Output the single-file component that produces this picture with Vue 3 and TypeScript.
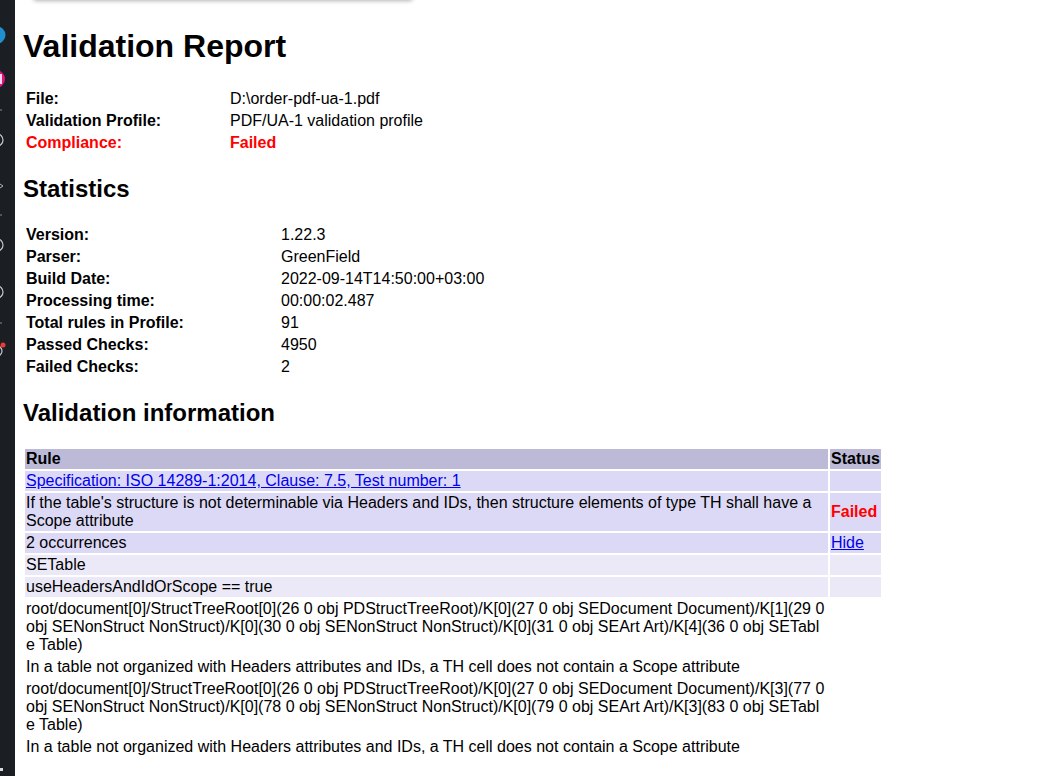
<script setup lang="ts">
const fileRows = [
  { label: 'File:', value: 'D:\\order-pdf-ua-1.pdf', failed: false },
  { label: 'Validation Profile:', value: 'PDF/UA-1 validation profile', failed: false },
  { label: 'Compliance:', value: 'Failed', failed: true },
]
const statRows = [
  ['Version:', '1.22.3'],
  ['Parser:', 'GreenField'],
  ['Build Date:', '2022-09-14T14:50:00+03:00'],
  ['Processing time:', '00:00:02.487'],
  ['Total rules in Profile:', '91'],
  ['Passed Checks:', '4950'],
  ['Failed Checks:', '2'],
]
const message = 'In a table not organized with Headers attributes and IDs, a TH cell does not contain a Scope attribute'
const occurrences = [
  'root/document[0]/StructTreeRoot[0](26 0 obj PDStructTreeRoot)/K[0](27 0 obj SEDocument Document)/K[1](29 0 obj SENonStruct NonStruct)/K[0](30 0 obj SENonStruct NonStruct)/K[0](31 0 obj SEArt Art)/K[4](36 0 obj SETable Table)',
  'root/document[0]/StructTreeRoot[0](26 0 obj PDStructTreeRoot)/K[0](27 0 obj SEDocument Document)/K[3](77 0 obj SENonStruct NonStruct)/K[0](78 0 obj SENonStruct NonStruct)/K[0](79 0 obj SEArt Art)/K[3](83 0 obj SETable Table)',
]
</script>

<template>
  <div class="page">
    <aside class="rail">
      <svg width="15" height="776" viewBox="0 0 15 776" fill="none">
        <circle cx="-3" cy="35" r="8.5" fill="#1f8fd0" />
        <circle cx="-4" cy="79" r="9" fill="#e0127f" />
        <rect x="0" y="74" width="2" height="10" fill="#f7d7e8" />
        <path d="M0 110h2" stroke="#8a8d91" />
        <circle cx="-3" cy="140" r="6" stroke="#c4c6c8" stroke-width="1.2" />
        <path d="M0 184l3 2-3 2" stroke="#b0b2b5" />
        <path d="M0 215h2" stroke="#8a8d91" />
        <circle cx="-3" cy="245" r="6" stroke="#c4c6c8" stroke-width="1.2" />
        <circle cx="-3" cy="292" r="6" stroke="#c4c6c8" stroke-width="1.2" />
        <path d="M0 323h2" stroke="#8a8d91" />
        <circle cx="-3" cy="351" r="5" stroke="#c4c6c8" stroke-width="1.2" />
        <circle cx="3" cy="345" r="2.5" fill="#f03a3a" />
        <rect x="0" y="768" width="3" height="3" fill="#d8dadc" />
      </svg>
    </aside>

    <main class="report">
      <div class="top-popup"></div>
      <h1>Validation Report</h1>

      <table class="summary">
        <tbody>
          <tr v-for="row in fileRows" :key="row.label" :class="{ failed: row.failed }">
            <td class="label label-file">{{ row.label }}</td>
            <td :class="{ strong: row.failed }">{{ row.value }}</td>
          </tr>
        </tbody>
      </table>

      <h2>Statistics</h2>

      <table class="summary">
        <tbody>
          <tr v-for="row in statRows" :key="row[0]">
            <td class="label label-stat">{{ row[0] }}</td>
            <td>{{ row[1] }}</td>
          </tr>
        </tbody>
      </table>

      <h2>Validation information</h2>

      <table class="rules">
        <thead>
          <tr class="head">
            <th class="col-rule">Rule</th>
            <th class="col-status">Status</th>
          </tr>
        </thead>
        <tbody>
          <tr class="tone">
            <td><a href="#">Specification: ISO 14289-1:2014, Clause: 7.5, Test number: 1</a></td>
            <td></td>
          </tr>
          <tr class="tone">
            <td>If the table's structure is not determinable via Headers and IDs, then structure elements of type TH shall have a Scope attribute</td>
            <td class="failed strong">Failed</td>
          </tr>
          <tr class="tone">
            <td>2 occurrences</td>
            <td><a href="#">Hide</a></td>
          </tr>
          <tr class="soft">
            <td>SETable</td>
            <td></td>
          </tr>
          <tr class="soft">
            <td>useHeadersAndIdOrScope == true</td>
            <td></td>
          </tr>
          <template v-for="item in occurrences" :key="item">
            <tr>
              <td class="path">{{ item }}</td>
              <td></td>
            </tr>
            <tr>
              <td>{{ message }}</td>
              <td></td>
            </tr>
          </template>
        </tbody>
      </table>
    </main>
  </div>
</template>

<style scoped>
.page {
  display: flex;
  width: 1047px;
  height: 776px;
  overflow: hidden;
  background: #ffffff;
  color: #000000;
  font-family: "Liberation Sans", Arial, sans-serif;
  font-size: 16px;
}
.rail {
  flex: 0 0 15px;
  height: 776px;
  background: #1b1f24;
}
.rail svg {
  display: block;
}
.report {
  position: relative;
  flex: 1;
  padding: 8px;
}
.top-popup {
  position: absolute;
  left: 18px;
  top: -10px;
  width: 380px;
  height: 10px;
  background: #ffffff;
  border-radius: 4px;
  box-shadow: 0 1px 4px rgba(0, 0, 0, 0.3);
}
h1 {
  margin: 20px 0 22px;
  font-size: 32px;
  font-weight: 700;
}
h2 {
  margin: 20px 0;
  font-size: 24px;
  font-weight: 700;
}
table {
  border-spacing: 2px;
  border-collapse: separate;
}
td,
th {
  padding: 1px;
  text-align: left;
  vertical-align: middle;
}
.label {
  font-weight: 700;
}
.label-file {
  width: 200px;
}
.label-stat {
  width: 251px;
}
.failed {
  color: #ff0000;
}
.strong {
  font-weight: 700;
}
.rules {
  table-layout: fixed;
  width: 860px;
}
.col-rule {
  width: 801px;
}
.col-status {
  width: 49px;
}
.head th {
  background: #bcbad6;
}
.tone td {
  background: #dcd9f6;
}
.soft td {
  background: #ebe9f7;
}
.path {
  word-break: break-all;
}
a {
  color: #0000ee;
  text-decoration: underline;
}
</style>
